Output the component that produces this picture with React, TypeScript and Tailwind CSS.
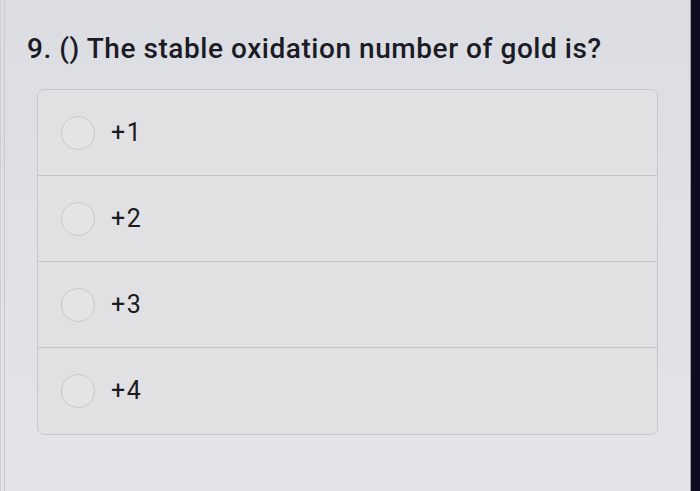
export default function App() {
  const opts = ["+1", "+2", "+3", "+4"];
  return (
    <div className="flex h-[491px] w-[700px] overflow-hidden bg-[#0d0d1f]" style={{ fontFamily: "Roboto, 'Liberation Sans', sans-serif" }}>
      <div className="flex h-full w-[691px] flex-col border-r border-l-[1px] border-r-[#9c9ca6] border-l-[#cfd0d6] bg-[linear-gradient(180deg,#dcdde3_0%,#e0e1e6_50%,#e3e4e8_100%)] pl-[3px]">
        <div className="flex h-full flex-col border-l border-[#c9cad0] pl-[22px] pr-[30px]">
          <div className="mt-[33px] whitespace-nowrap text-[28px] font-medium leading-[32px] tracking-[0.55px] text-[#1b1b26]">
            9. () The stable oxidation number of gold is?
          </div>
          <div className="ml-[10px] mt-[24px] w-[621px] rounded-[7px] border border-[#c6c7cc] bg-[#e1e1e4]">
            {opts.map((o, i) => (
              <div
                key={o}
                className={`flex h-[86px] items-center pl-[23px] ${i < 3 ? "border-b border-[#c4c5c9]" : ""}`}
              >
                <div className="h-[34px] w-[34px] rounded-full border-[1.5px] border-[#c8c8cc] bg-[#e4e4e7]" />
                <span className="ml-[16px] text-[25px] leading-[28px] tracking-[1.5px] text-[#1a1a1f]">{o}</span>
              </div>
            ))}
          </div>
        </div>
      </div>
    </div>
  );
}
